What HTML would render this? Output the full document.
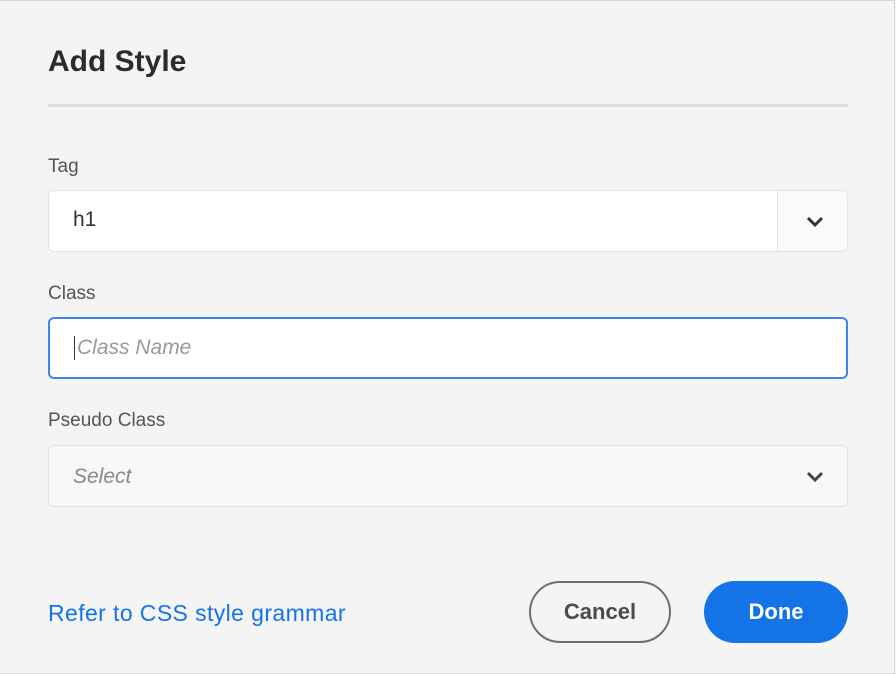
<!DOCTYPE html><html><head><style>
body{margin:0;width:896px;height:674px;background:#f4f4f4;font-family:"Liberation Sans",sans-serif;position:relative;overflow:hidden}
.frame{position:absolute;left:0;top:0;width:894px;height:672px;border:1px solid #d8d8d8;border-left:none}
.t{position:absolute;left:48px;top:45px;font-size:30px;font-weight:bold;color:#2c2c2c}
.hr{position:absolute;left:48px;top:104px;width:800px;height:3px;background:#dedede}
.lbl{position:absolute;left:48px;font-size:19px;color:#555}
.box{position:absolute;left:48px;width:798px;height:60px;border:1px solid #e3e3e3;border-radius:6px;background:#fff;box-sizing:content-box;overflow:hidden}
.chev{position:absolute;right:22px;top:24px}
</style></head><body><div class="frame"></div>
<div class="t">Add Style</div><div class="hr"></div>
<div class="lbl" style="top:156px">Tag</div>
<div class="box" style="top:190px"><span style="position:absolute;left:24px;top:17px;font-size:21px;color:#333">h1</span>
<div style="position:absolute;left:728px;top:0;width:70px;height:60px;border-left:1px solid #e3e3e3;background:#fafafa"></div>
<svg class="chev" width="20" height="14" viewBox="0 0 20 14"><path d="M3 3l7 7 7-7" fill="none" stroke="#333" stroke-width="3"/></svg></div>
<div class="lbl" style="top:283px">Class</div>
<div class="box" style="top:317px;width:796px;border:2px solid #3b86ea;height:58px"><span style="position:absolute;left:24px;top:17px;font-size:21px;color:#999;font-style:italic;border-left:1px solid #333;padding-left:2px">Class Name</span></div>
<div class="lbl" style="top:410px">Pseudo Class</div>
<div class="box" style="top:445px;background:#f8f8f8"><span style="position:absolute;left:24px;top:19px;font-size:21px;color:#888;font-style:italic">Select</span>
<svg class="chev" width="20" height="14" viewBox="0 0 20 14"><path d="M3 3l7 7 7-7" fill="none" stroke="#444" stroke-width="3"/></svg></div>
<div style="position:absolute;left:48px;top:600px;font-size:23px;letter-spacing:0.4px;color:#1473e6">Refer to CSS style grammar</div>
<div style="position:absolute;left:529px;top:581px;width:138px;height:58px;border:2px solid #6e6e6e;border-radius:31px;text-align:center;line-height:58px;font-size:22px;font-weight:bold;color:#4b4b4b">Cancel</div>
<div style="position:absolute;left:704px;top:581px;width:144px;height:62px;background:#1473e6;border-radius:31px;text-align:center;line-height:62px;font-size:22px;font-weight:bold;color:#fff">Done</div>
</body></html>
